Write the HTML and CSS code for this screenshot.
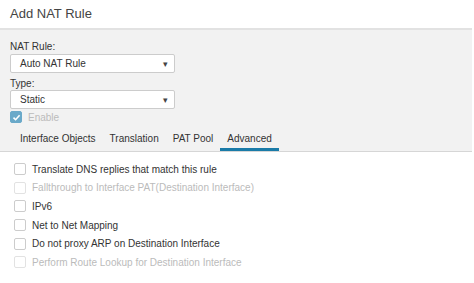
FILE: index.html
```html
<!DOCTYPE html>
<html lang="en">
<head>
    <meta charset="UTF-8">
    <meta name="viewport" content="width=device-width, initial-scale=1.0">
    <title>Add NAT Rule</title>
    <link rel="stylesheet" href="styles.css">
</head>
<body>
    <div class="dialog">
        <div class="header">Add NAT Rule</div>
        <div class="top">
            <label class="field-label">NAT Rule:</label>
            <div class="select"><span>Auto NAT Rule</span><span class="caret">&#9662;</span></div>
            <label class="field-label">Type:</label>
            <div class="select"><span>Static</span><span class="caret">&#9662;</span></div>
            <div class="enable">
                <span class="check checked">
                    <svg width="9" height="9" viewBox="0 0 9 9"><path d="M1.5 4.6 L3.6 6.7 L7.6 2.2" fill="none" stroke="#fff" stroke-width="1.6"/></svg>
                </span>
                <span class="enable-text">Enable</span>
            </div>
            <div class="tabs">
                <div class="tab">Interface Objects</div>
                <div class="tab">Translation</div>
                <div class="tab">PAT Pool</div>
                <div class="tab active">Advanced</div>
            </div>
        </div>
        <ul class="options">
            <li><span class="check"></span>Translate DNS replies that match this rule</li>
            <li class="disabled"><span class="check"></span>Fallthrough to Interface PAT(Destination Interface)</li>
            <li><span class="check"></span>IPv6</li>
            <li><span class="check"></span>Net to Net Mapping</li>
            <li><span class="check"></span>Do not proxy ARP on Destination Interface</li>
            <li class="disabled"><span class="check"></span>Perform Route Lookup for Destination Interface</li>
        </ul>
    </div>
</body>
</html>
```

FILE: styles.css
```css
body {
    margin: 0;
    background: #fff;
    font-family: "Liberation Sans", Arial, sans-serif;
    color: #333;
}
.dialog {
    width: 472px;
    height: 283px;
    overflow: hidden;
}
.header {
    height: 28px;
    padding-left: 10px;
    font-size: 13px;
    line-height: 27px;
    color: #444;
    background: #fff;
}
.top {
    background: #f2f2f2;
    border-top: 2px solid #e2e2e2;
    border-bottom: 1px solid #d6d6d6;
    padding: 11px 0 0 10px;
}
.field-label {
    display: block;
    font-size: 10px;
    line-height: 12px;
    height: 13px;
    color: #333;
}
.select {
    width: 148px;
    height: 17px;
    margin-bottom: 5px;
    padding: 0 6px 0 9px;
    background: #fff;
    border: 1px solid #ccc;
    border-radius: 2px;
    display: flex;
    align-items: center;
    justify-content: space-between;
    font-size: 10px;
    color: #333;
}
.select + .field-label {
    height: 12px;
}
.caret {
    font-size: 9px;
    color: #444;
}
.enable {
    display: flex;
    align-items: center;
    margin-top: -4px;
    height: 14px;
}
.enable-text {
    margin-left: 6px;
    font-size: 10px;
    color: #bbb;
}
.check {
    width: 10px;
    height: 10px;
    border: 1px solid #ccc;
    border-radius: 2px;
    background: #fff;
    display: inline-flex;
    align-items: center;
    justify-content: center;
    flex-shrink: 0;
}
.check.checked {
    background: #6aa9c9;
    border-color: #6aa9c9;
}
.tabs {
    display: flex;
    padding-left: 3px;
}
.tab {
    font-size: 10px;
    line-height: 12px;
    padding: 9px 7px 3px;
    border-bottom: 3px solid transparent;
    color: #333;
}
.active {
    border-bottom-color: #1a7ba8;
}
.options {
    list-style: none;
    margin: 0;
    padding: 8px 0 0 14px;
}
.options li {
    display: flex;
    align-items: center;
    height: 18.6px;
    font-size: 10px;
    color: #333;
}
.options .check {
    margin-right: 6px;
}
.options .disabled {
    color: #bbb;
}
.options .disabled .check {
    border-color: #e2e2e2;
}
```
